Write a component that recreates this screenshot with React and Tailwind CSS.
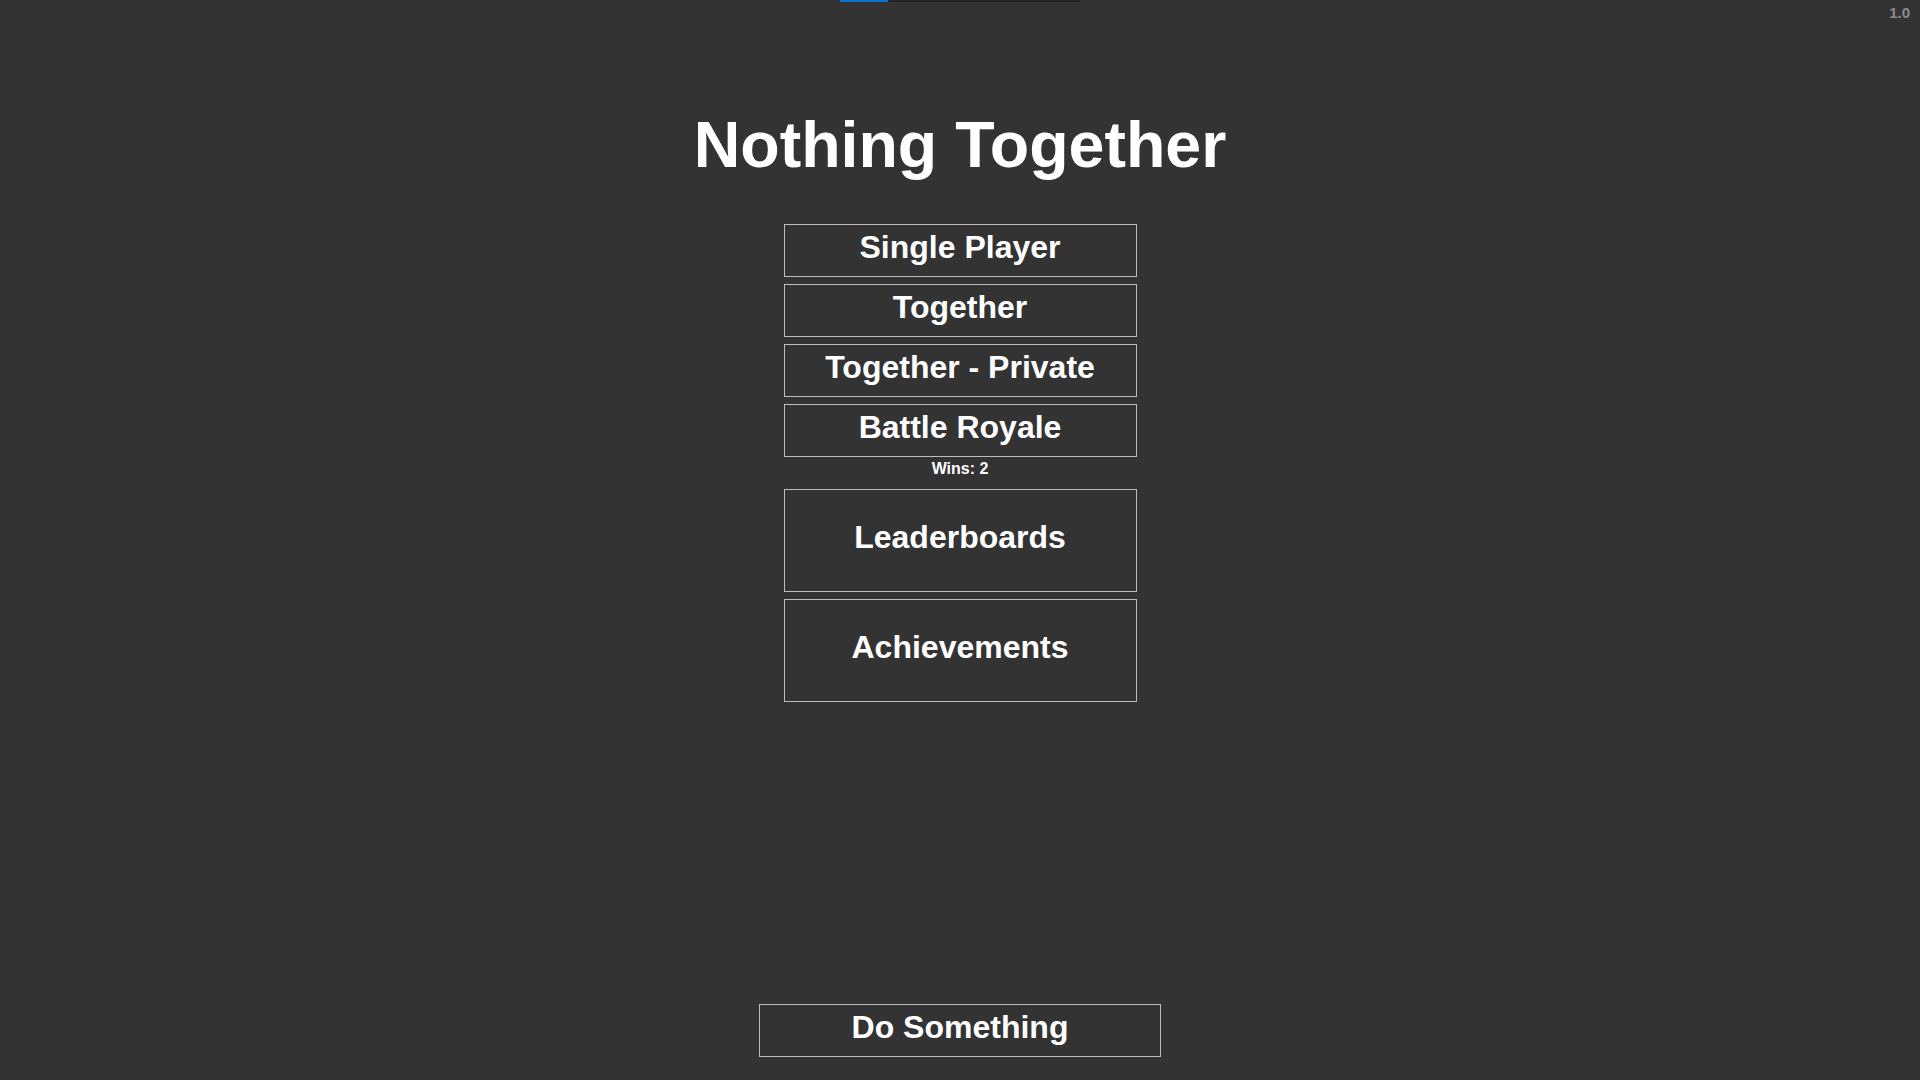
import React from "react";

function MenuButton({ label, tall }) {
  return (
    <div
      className={
        "w-[353px] border border-[#bdbdbd] flex justify-center text-[32px] leading-[32px] font-bold text-white " +
        (tall ? "h-[103px] pt-[31px]" : "h-[53px] pt-[6px]")
      }
    >
      {label}
    </div>
  );
}

export default function App() {
  return (
    <div
      className="relative w-full h-screen bg-[#333333] overflow-hidden flex flex-col items-center"
      style={{ fontFamily: '"Liberation Sans", Arial, sans-serif' }}
    >
      {/* top progress bar */}
      <div className="absolute top-0 left-1/2 -translate-x-1/2 w-[240px] h-[2px] bg-[#232323] flex">
        <div className="w-[48px] h-full bg-[#0a74d6]" />
      </div>

      {/* version */}
      <div className="absolute top-[5px] right-[10px] text-[15px] leading-[16px] font-bold text-[#8c8c8c]">
        1.0
      </div>

      <h1 className="mt-[113px] text-[64.5px] leading-[65px] font-bold text-white">
        Nothing Together
      </h1>

      <div className="mt-[46px] flex flex-col items-center gap-[7px]">
        <MenuButton label="Single Player" />
        <MenuButton label="Together" />
        <MenuButton label="Together - Private" />
        <MenuButton label="Battle Royale" />
      </div>

      <div className="mt-[4px] text-[16px] leading-[16px] font-bold text-white">
        Wins: 2
      </div>

      <div className="mt-[12px] flex flex-col items-center gap-[7px]">
        <MenuButton label="Leaderboards" tall />
        <MenuButton label="Achievements" tall />
      </div>

      <div className="flex-1" />

      <div className="mb-[23px] w-[402px] h-[53px] pt-[6px] border border-[#bdbdbd] flex justify-center text-[32px] leading-[32px] font-bold text-white">
        Do Something
      </div>
    </div>
  );
}
